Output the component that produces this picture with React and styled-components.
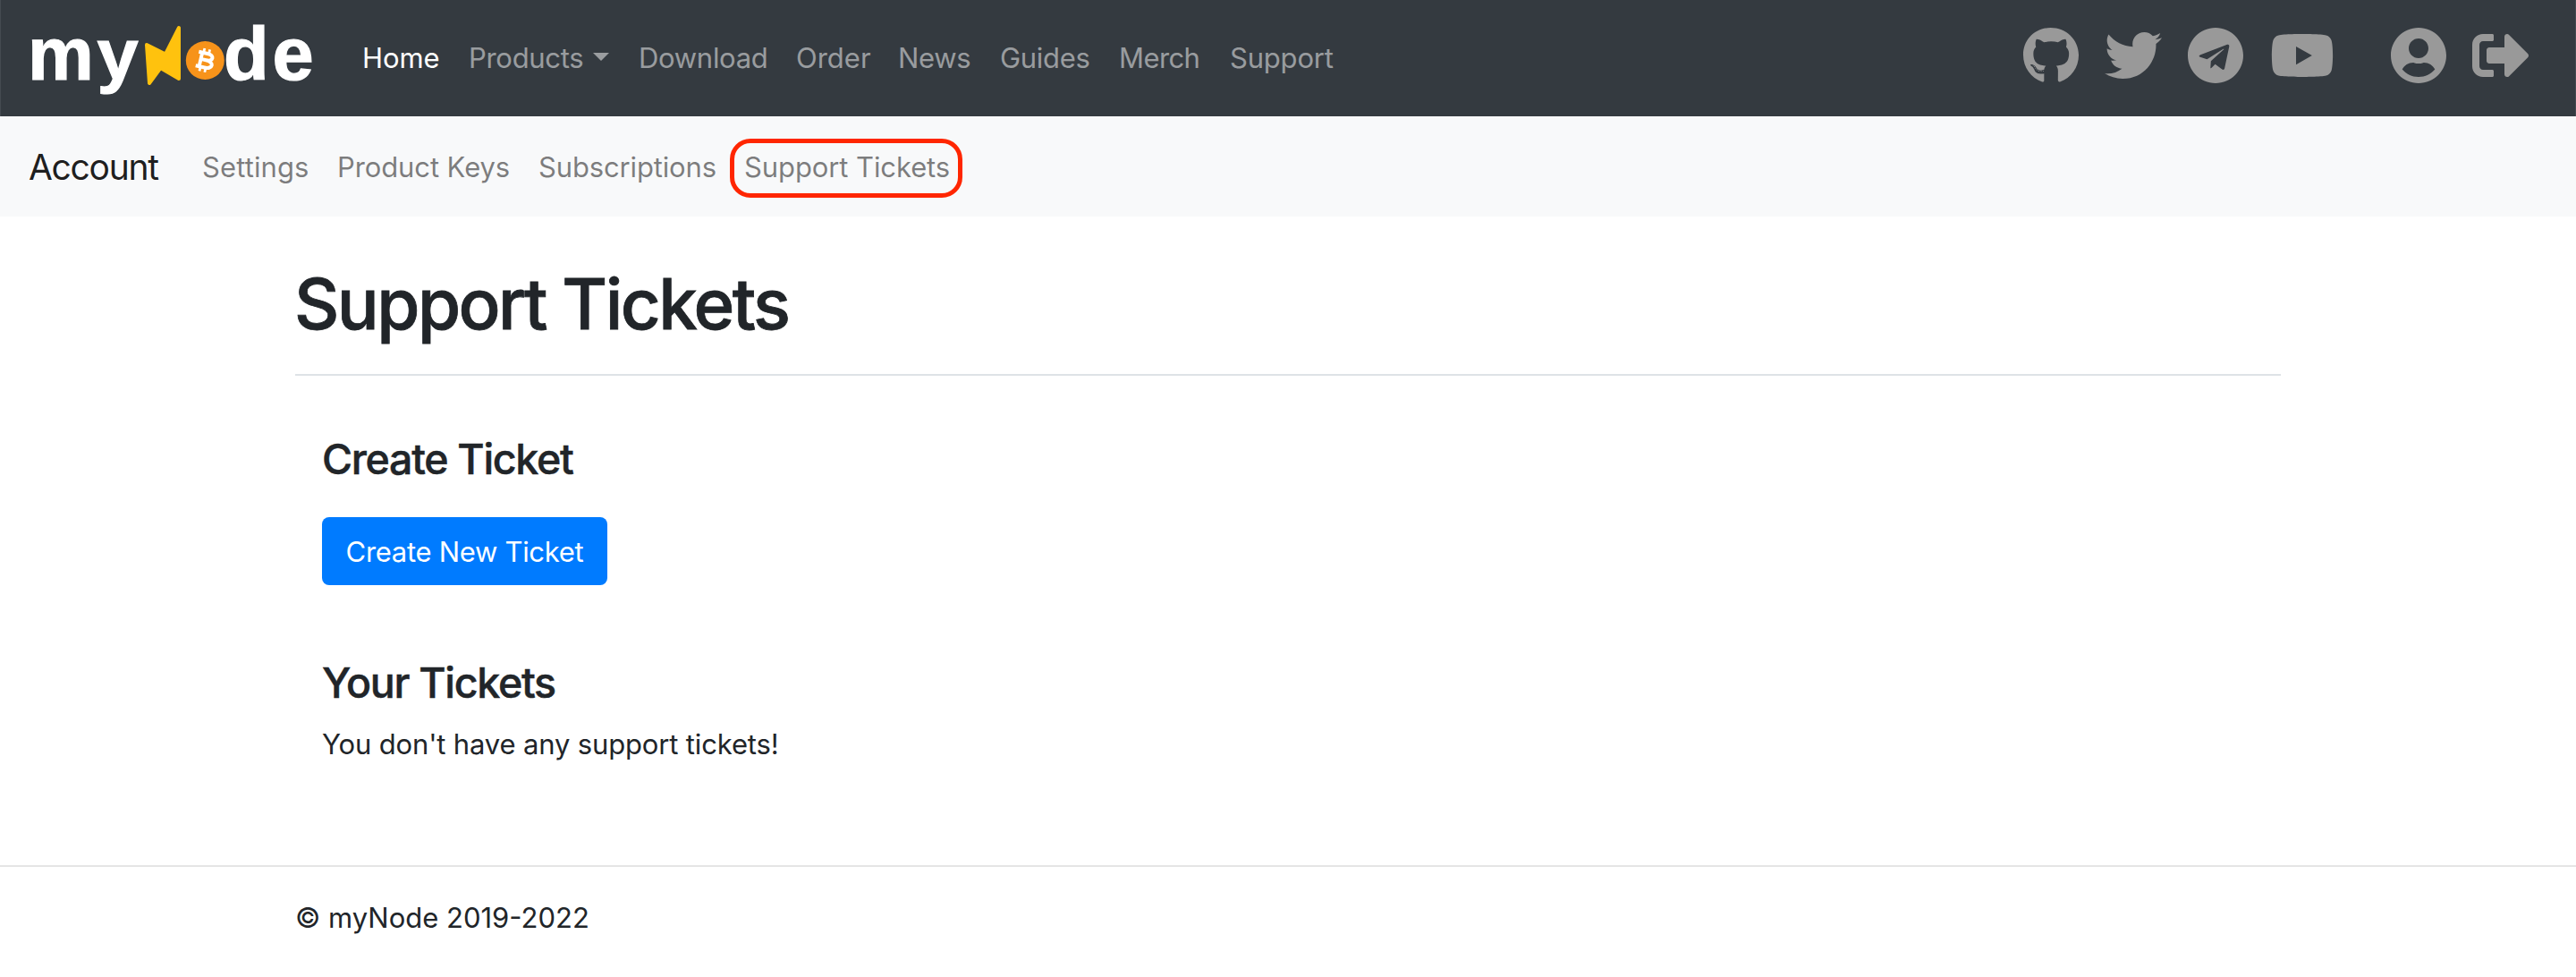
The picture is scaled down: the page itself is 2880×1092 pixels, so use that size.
import React from "react";
import styled, { createGlobalStyle } from "styled-components";
import {
  FaGithub,
  FaTwitter,
  FaTelegram,
  FaYoutube,
  FaUserCircle,
  FaSignOutAlt,
} from "react-icons/fa";

const GlobalStyle = createGlobalStyle`
  *, *::before, *::after {
    box-sizing: border-box;
  }
  body {
    margin: 0;
    background: #fff;
    color: #212529;
    font-family: Inter, "Liberation Sans", sans-serif;
    font-size: 31px;
    line-height: 48px;
  }
`;

const Navbar = styled.nav`
  display: flex;
  align-items: center;
  height: 130px;
  padding: 0 51px 0 27px;
  border: solid #454b51;
  border-width: 0 1px;
  background: #343a40;
`;

const Logo = styled.svg`
  display: block;
  width: 328px;
  height: 130px;
  margin-right: 33px;
`;

const NavList = styled.ul`
  display: flex;
  margin: 0;
  padding: 0;
  list-style: none;
`;

const NavItem = styled.li`
  width: ${(p) => p.$width}px;
  padding: 0 16px;
  color: ${(p) => (p.$active ? "#fff" : "rgba(255, 255, 255, 0.5)")};
  letter-spacing: ${(p) => p.$spacing ?? -0.3}px;
  white-space: nowrap;
`;

const Caret = styled.span`
  display: inline-block;
  margin-left: 11px;
  vertical-align: 8px;
  border-top: 9.6px solid;
  border-right: 9.6px solid transparent;
  border-left: 9.6px solid transparent;
`;

const IconList = styled.div`
  display: flex;
  align-items: center;
  gap: 28px;
  height: 64px;
  margin: 0 0 6px auto;
  color: #999;
  font-size: 64px;
  svg {
    display: block;
  }
`;

const YoutubeIcon = styled(FaYoutube)`
  width: 72px;
  margin-left: 1px;
`;

const AccountIcon = styled(FaUserCircle)`
  margin-left: 34px;
`;

const SubNav = styled.nav`
  display: flex;
  align-items: center;
  height: 112px;
  padding: 2px 32px 0;
  background: #f8f9fa;
`;

const Brand = styled.span`
  width: 145px;
  margin-right: 33px;
  color: rgba(0, 0, 0, 0.9);
  font-size: 39px;
  line-height: 60px;
  letter-spacing: -1.3px;
`;

const SubItem = styled(NavItem)`
  position: relative;
  color: rgba(0, 0, 0, 0.5);
`;

const Highlight = styled.span`
  position: absolute;
  top: -8px;
  left: 0;
  width: 260px;
  height: 66px;
  border: 5px solid #ff2600;
  border-radius: 23px;
`;

const Container = styled.main`
  width: 2220px;
  margin: 0 auto;
  padding-top: 50px;
`;

const PageTitle = styled.h1`
  margin: 0;
  padding-bottom: 30px;
  border-bottom: 2px solid #dee2e6;
  font-size: 78px;
  font-weight: 500;
  line-height: 96px;
  letter-spacing: -2.55px;
  text-indent: -1px;
  -webkit-text-stroke: 0.8px;
`;

const Section = styled.section`
  padding: 0 30px;
  margin-top: ${(p) => p.$top};
`;

const SectionTitle = styled.h4`
  margin: 0 0 ${(p) => p.$gap};
  font-size: 46.5px;
  font-weight: 500;
  line-height: 58px;
  letter-spacing: -1.3px;
  -webkit-text-stroke: 0.5px;
`;

const Button = styled.button`
  display: block;
  width: 319px;
  height: 76px;
  padding: 2px 0 0;
  border: 0;
  border-radius: 8px;
  background: #007bff;
  color: #fff;
  font: inherit;
  letter-spacing: -0.3px;
`;

const Message = styled.p`
  margin: 0;
  letter-spacing: -0.15px;
`;

const Footer = styled.footer`
  margin-top: 111px;
  padding: 33px 330px;
  border-top: 2px solid #e5e5e5;
  letter-spacing: 0;
`;

const links = [
  { title: "Home", active: true, width: 119, spacing: -0.1 },
  { title: "Products", dropdown: true, width: 190 },
  { title: "Download", width: 176 },
  { title: "Order", width: 114, spacing: 0 },
  { title: "News", width: 114 },
  { title: "Guides", width: 133 },
  { title: "Merch", width: 124, spacing: -0.6 },
  { title: "Support", width: 150, spacing: -0.2 },
];

const accountLinks = [
  { title: "Settings", width: 151, spacing: 0.1 },
  { title: "Product Keys", width: 225, spacing: -0.1 },
  { title: "Subscriptions", width: 230, spacing: -0.15 },
  { title: "Support Tickets", width: 260, spacing: -0.1, highlight: true },
];

const MyNodeLogo = () => (
  <Logo viewBox="28 0 328 130">
    <g
      fill="#fff"
      stroke="#fff"
      strokeWidth="1.200"
      fontFamily="Liberation Sans, Arial, sans-serif"
      fontWeight="bold"
      fontSize="83"
    >
      <text x="31" y="88.500">
        m
      </text>
      <text x="108.500" y="92" transform="scale(1 0.96)">
        y
      </text>
      <text x="250" y="88.500">
        d
      </text>
      <text x="304.500" y="88.500">
        e
      </text>
    </g>
    <path
      d="M164 50 L185 60.500 L200 31 L200 88 L179.500 76 L167 93 Z"
      fill="#ffc20e"
      stroke="#ffc20e"
      strokeWidth="4"
      strokeLinejoin="round"
    />
    <circle cx="229.3" cy="67.5" r="21.5" fill="#f7931a" />
    <g
      transform="translate(229.3 67.5) rotate(13)"
      fill="none"
      stroke="#fff"
      strokeWidth="4"
    >
      <path d="M-9 -8 H1 C9.5 -8 9.500 -0.500 1 -0.500 H-5 M1 -0.500 C11 -0.500 11 8 1 8 H-9 M-5 -8 V8" />
      <path d="M-3.500 -13 V-8 M2.500 -13 V-8 M-3.500 8 V13 M2.500 8 V13" strokeWidth="2.800" />
    </g>
  </Logo>
);

export default function App() {
  return (
    <>
      <GlobalStyle />
      <Navbar>
        <MyNodeLogo />
        <NavList>
          {links.map((link) => (
            <NavItem
              key={link.title}
              $active={link.active}
              $width={link.width}
              $spacing={link.spacing}
            >
              {link.title}
              {link.dropdown && <Caret />}
            </NavItem>
          ))}
        </NavList>
        <IconList>
          <FaGithub />
          <FaTwitter />
          <FaTelegram />
          <YoutubeIcon />
          <AccountIcon />
          <FaSignOutAlt />
        </IconList>
      </Navbar>
      <SubNav>
        <Brand>Account</Brand>
        <NavList>
          {accountLinks.map((link) => (
            <SubItem
              key={link.title}
              $width={link.width}
              $spacing={link.spacing}
            >
              {link.title}
              {link.highlight && <Highlight />}
            </SubItem>
          ))}
        </NavList>
      </SubNav>
      <Container>
        <PageTitle>Support Tickets</PageTitle>
        <Section $top="64px">
          <SectionTitle $gap="36px">Create Ticket</SectionTitle>
          <Button>Create New Ticket</Button>
        </Section>
        <Section $top="80px">
          <SectionTitle $gap="16px">Your Tickets</SectionTitle>
          <Message>You don't have any support tickets!</Message>
        </Section>
      </Container>
      <Footer>© myNode 2019-2022</Footer>
    </>
  );
}
